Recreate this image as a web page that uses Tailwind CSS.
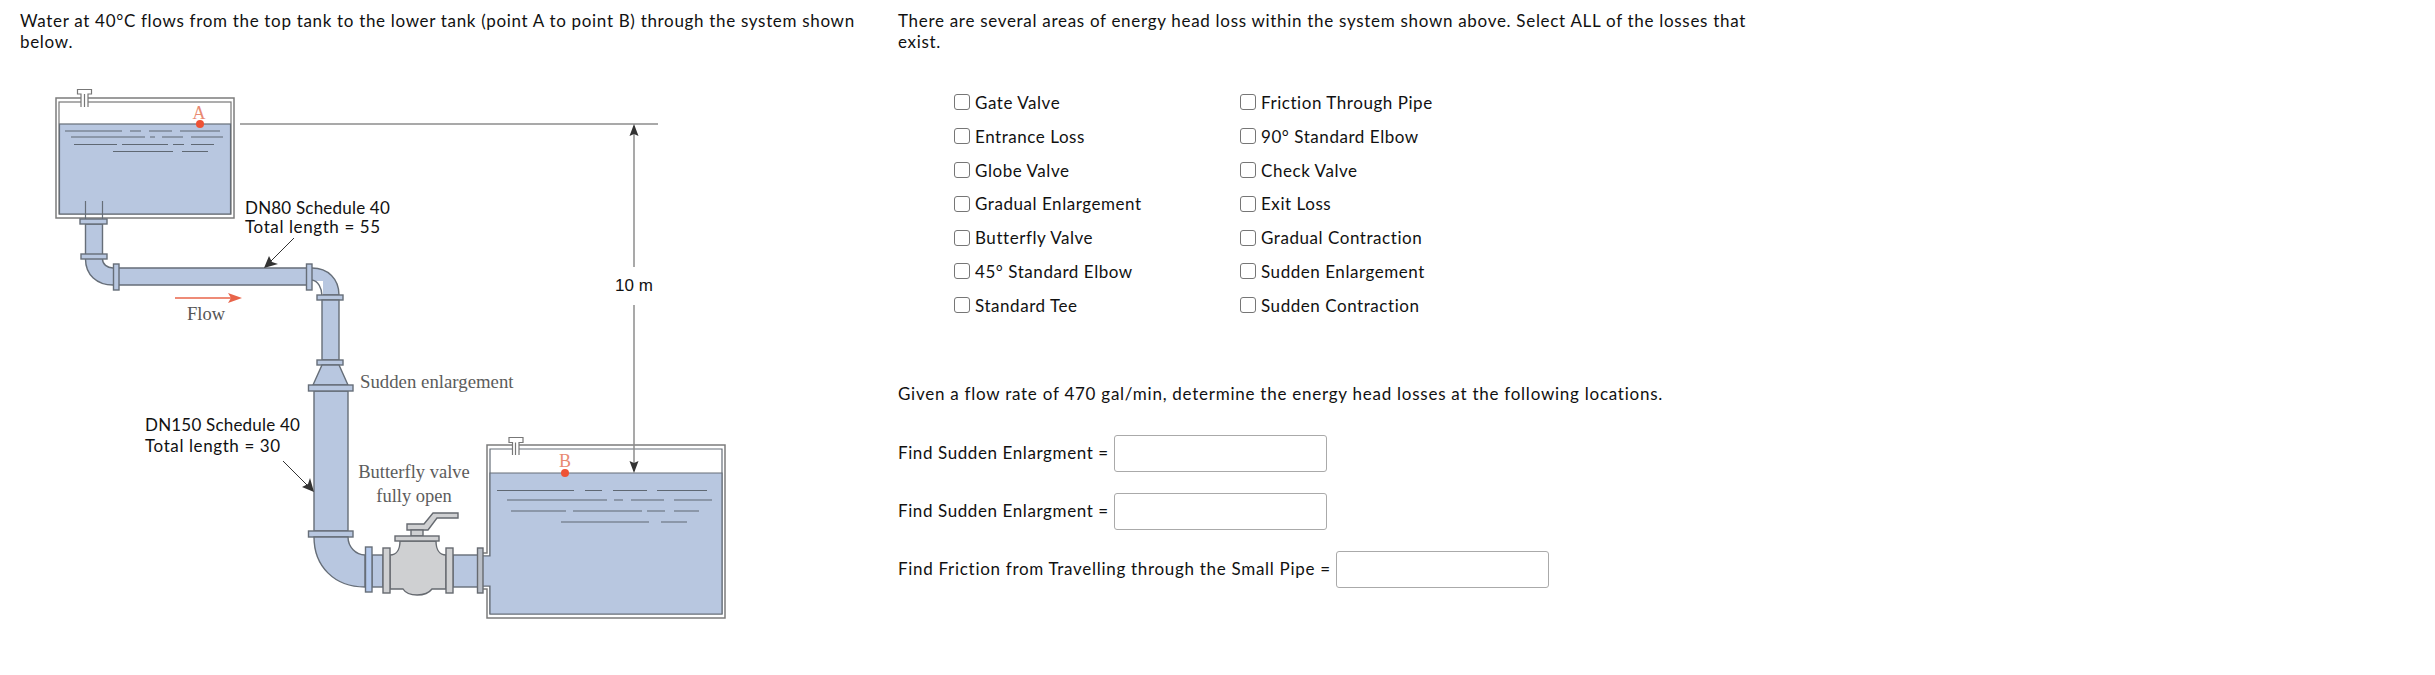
<!DOCTYPE html>
<html lang="en">
<head>
    <meta charset="UTF-8">
    <title>Energy Head Loss</title>
    <script src="https://cdn.jsdelivr.net/npm/@tailwindcss/browser@4"></script>
</head>
<body class="bg-white text-[#111] font-['Lato',sans-serif] text-[17px] tracking-[0.55px] leading-[21px] flex h-[675px] overflow-hidden">

    <!-- Left column: problem text and diagram -->
    <div class="w-[898px] shrink-0 pl-5 pt-[10px]">
        <p class="w-[850px] tracking-[0.68px]">Water at 40°C flows from the top tank to the lower tank (point A to point B) through the system shown below.</p>
        <svg class="block mt-[28px] ml-[30px]" width="680" height="550" viewBox="50 80 680 550" fill="none">
            <!-- tank A -->
            <rect x="56" y="98" width="178" height="120" fill="#fff" stroke="#7c7c7c" stroke-width="1.5"/>
            <rect x="59" y="102" width="172" height="112" fill="#fff" stroke="#777" stroke-width="1.2"/>
            <rect x="59.5" y="124" width="171" height="90" fill="#b8c7e0" stroke="#666e78" stroke-width="1.2"/>
            <g stroke="#5f6873" stroke-width="1.1">
                <path d="M65 131h57M130 131h11M149 131h23M180 131h40"/>
                <path d="M71 137h74M150 137h5M162 137h21M191 137h32"/>
                <path d="M74 144.500h43M122 144.500h46M173 144.500h11M191 144.500h23"/>
                <path d="M113 151.500h60M182 151.500h26"/>
            </g>
            <path d="M81 107V94h-3.500v-4.500h14V94H88v13M84.500 94v13" fill="#fff" stroke="#777" stroke-width="1.2"/>
            <circle cx="200" cy="124" r="4" fill="#ee5235"/>
            <text x="199" y="119" text-anchor="middle" class="font-['Liberation_Serif',serif] text-[18px] tracking-normal" fill="#e98a72">A</text>
            <line x1="240" y1="124" x2="658" y2="124" stroke="#8c8c8c" stroke-width="1.5"/>

            <!-- upper pipe -->
            <path d="M85.500 201V219M102.500 201V219" stroke="#666e78" stroke-width="1.2"/>
            <path d="M85.500 224V259C85.500 275 97 285 113 285H322V295H339C339 279 328 268 312 268H113C107 268 102.500 264 102.500 259V224Z" fill="#b8c7e0" stroke="#666e78" stroke-width="1.4"/>
            <path d="M312 281H323V296H312Z" fill="#fff"/>
            <path d="M312 280C318 281 322 288 322 296" stroke="#666e78" stroke-width="1.4"/>
            <g fill="#b8c7e0" stroke="#666e78" stroke-width="1.4">
                <rect x="80" y="219" width="27" height="5"/>
                <rect x="81" y="254" width="26" height="5"/>
                <rect x="113.500" y="264" width="5.500" height="26"/>
                <rect x="306.500" y="264" width="5.500" height="26"/>
                <rect x="317" y="295" width="26" height="5"/>
                <path d="M322 300H339V360H322Z"/>
                <rect x="317" y="360" width="26" height="5"/>
                <path d="M322 365H339L348 385H313Z"/>
                <path d="M314 391H348V531H314Z"/>
                <rect x="308.500" y="385" width="44.500" height="6"/>
                <rect x="308.500" y="531" width="44.500" height="6"/>
                <path d="M314 537C314 566 334 587 365 587V555C356 555 348 547 348 537Z"/>
                <rect x="372" y="555" width="11" height="32"/>
                <rect x="453" y="555" width="25" height="32"/>
            </g>
            <rect x="365.500" y="547" width="6.500" height="45" fill="#b4c9ec" stroke="#666e78" stroke-width="1.4"/>

            <!-- butterfly valve -->
            <g fill="#cfd0d2" stroke="#666a70" stroke-width="1.4">
                <path d="M424 524L433 513H458V518H437L428 530H407V524Z"/>
                <rect x="411" y="530" width="12" height="6"/>
                <path d="M390 555C396 555 400 550 400 541H436C436 550 440 555 446 555V589H432C426 597 408 597 403 589H390Z"/>
                <rect x="395" y="536" width="44" height="5"/>
                <rect x="383" y="548" width="7" height="45"/>
                <rect x="446" y="548" width="7" height="45"/>
            </g>

            <!-- tank B -->
            <path d="M483 553H487V445H725V618H487V589H483" fill="#fff" stroke="#7c7c7c" stroke-width="1.5"/>
            <path d="M483 556H490V449H722V614H490V586H483" fill="#fff" stroke="#666e78" stroke-width="1.2"/>
            <path d="M483 556H490V473H722V614H490V586H483Z" fill="#b8c7e0" stroke="#666e78" stroke-width="1.2"/>
            <path d="M483.500 556.500V585.500" stroke="#b8c7e0" stroke-width="1.400"/>
            <rect x="477.500" y="548" width="5.500" height="45" fill="#b9bec7" stroke="#666a70" stroke-width="1.4"/>
            <g stroke="#5f6873" stroke-width="1.1">
                <path d="M497 490.500h77M585 490.500h17M613 490.500h34M657 490.500h50"/>
                <path d="M507 500h100M614 500h9M631 500h33M674 500h38"/>
                <path d="M511 511h55M573 511h69M647 511h18M674 511h25"/>
                <path d="M561 522h88M661 522h26"/>
            </g>
            <path d="M512.500 455V442.500H509V437.500H523V442.500H519V455M515.500 442.500V455" fill="#fff" stroke="#777" stroke-width="1.2"/>
            <circle cx="565" cy="473" r="4" fill="#ee5235"/>
            <text x="565" y="467" text-anchor="middle" class="font-['Liberation_Serif',serif] text-[18px] tracking-normal" fill="#e98a72">B</text>

            <!-- 10 m dimension -->
            <line x1="634" y1="126" x2="634" y2="267" stroke="#8c8c8c" stroke-width="1.5"/>
            <line x1="634" y1="305" x2="634" y2="470" stroke="#8c8c8c" stroke-width="1.5"/>
            <path d="M634 124L638.500 136L634 134L629.500 136Z" fill="#333"/>
            <path d="M634 473L638.500 461L634 463L629.500 461Z" fill="#333"/>
            <text x="634" y="291" text-anchor="middle" class="font-['Liberation_Sans',sans-serif] text-[17px] tracking-normal" fill="#111">10 m</text>

            <!-- flow arrow -->
            <path d="M175 298H232" stroke="#e8644a" stroke-width="1.4"/>
            <path d="M242 298L228 293L231 298L228 303Z" fill="#e8644a"/>
            <text x="187" y="320" class="font-['Liberation_Serif',serif] text-[18.500px] tracking-normal" fill="#555">Flow</text>

            <!-- pipe labels -->
            <path d="M294 238L266 266" stroke="#333"/>
            <path d="M264 268L269 256L272 262L278 264Z" fill="#333"/>
            <path d="M283 461L313 491" stroke="#333"/>
            <path d="M314 492L302 487L308 484L310 478Z" fill="#333"/>
            <g fill="#111">
                <text x="245" y="214" class="tracking-[0.2px]">DN80 Schedule 40</text>
                <text x="245" y="233" class="tracking-[0.6px]">Total length = 55</text>
                <text x="145" y="431" class="tracking-[0.2px]">DN150 Schedule 40</text>
                <text x="145" y="452" class="tracking-[0.6px]">Total length = 30</text>
            </g>
            <g fill="#5c5c5c" class="font-['Liberation_Serif',serif] text-[18.500px] tracking-normal">
                <text x="360" y="388" class="text-[18.800px]">Sudden enlargement</text>
                <text x="414" y="478" text-anchor="middle">Butterfly valve</text>
                <text x="414" y="502" text-anchor="middle">fully open</text>
            </g>
        </svg>
    </div>

    <!-- Right column: questions -->
    <div class="w-[860px] shrink-0 pt-[10px]">
        <p class="tracking-[0.7px]">There are several areas of energy head loss within the system shown above. Select ALL of the losses that exist.</p>

        <div class="grid grid-cols-[286px_286px] ml-[56px] mt-[33.6px]">
            <label class="h-[33.8px] flex items-center gap-[5px]"><input type="checkbox" class="appearance-none size-4 border border-[#767676] rounded-[3px]">Gate Valve</label>
            <label class="h-[33.8px] flex items-center gap-[5px]"><input type="checkbox" class="appearance-none size-4 border border-[#767676] rounded-[3px]">Friction Through Pipe</label>
            <label class="h-[33.8px] flex items-center gap-[5px]"><input type="checkbox" class="appearance-none size-4 border border-[#767676] rounded-[3px]">Entrance Loss</label>
            <label class="h-[33.8px] flex items-center gap-[5px]"><input type="checkbox" class="appearance-none size-4 border border-[#767676] rounded-[3px]">90° Standard Elbow</label>
            <label class="h-[33.8px] flex items-center gap-[5px]"><input type="checkbox" class="appearance-none size-4 border border-[#767676] rounded-[3px]">Globe Valve</label>
            <label class="h-[33.8px] flex items-center gap-[5px]"><input type="checkbox" class="appearance-none size-4 border border-[#767676] rounded-[3px]">Check Valve</label>
            <label class="h-[33.8px] flex items-center gap-[5px]"><input type="checkbox" class="appearance-none size-4 border border-[#767676] rounded-[3px]">Gradual Enlargement</label>
            <label class="h-[33.8px] flex items-center gap-[5px]"><input type="checkbox" class="appearance-none size-4 border border-[#767676] rounded-[3px]">Exit Loss</label>
            <label class="h-[33.8px] flex items-center gap-[5px]"><input type="checkbox" class="appearance-none size-4 border border-[#767676] rounded-[3px]">Butterfly Valve</label>
            <label class="h-[33.8px] flex items-center gap-[5px]"><input type="checkbox" class="appearance-none size-4 border border-[#767676] rounded-[3px]">Gradual Contraction</label>
            <label class="h-[33.8px] flex items-center gap-[5px]"><input type="checkbox" class="appearance-none size-4 border border-[#767676] rounded-[3px]">45° Standard Elbow</label>
            <label class="h-[33.8px] flex items-center gap-[5px]"><input type="checkbox" class="appearance-none size-4 border border-[#767676] rounded-[3px]">Sudden Enlargement</label>
            <label class="h-[33.8px] flex items-center gap-[5px]"><input type="checkbox" class="appearance-none size-4 border border-[#767676] rounded-[3px]">Standard Tee</label>
            <label class="h-[33.8px] flex items-center gap-[5px]"><input type="checkbox" class="appearance-none size-4 border border-[#767676] rounded-[3px]">Sudden Contraction</label>
        </div>

        <p class="mt-[60.4px] tracking-[0.75px]">Given a flow rate of 470 gal/min, determine the energy head losses at the following locations.</p>

        <div class="mt-[31px] flex flex-col gap-[21px]">
            <label class="flex items-center gap-[5px] tracking-[0.6px]"><span class="-mt-[2px]">Find Sudden Enlargment =</span><input type="text" class="w-[213px] h-[37px] border border-[#aaa] rounded-[3px]"></label>
            <label class="flex items-center gap-[5px] tracking-[0.6px]"><span class="-mt-[2px]">Find Sudden Enlargment =</span><input type="text" class="w-[213px] h-[37px] border border-[#aaa] rounded-[3px]"></label>
            <label class="flex items-center gap-[5px] tracking-[0.7px]"><span class="-mt-[2px]">Find Friction from Travelling through the Small Pipe =</span><input type="text" class="w-[213px] h-[37px] border border-[#aaa] rounded-[3px]"></label>
        </div>
    </div>

</body>
</html>
